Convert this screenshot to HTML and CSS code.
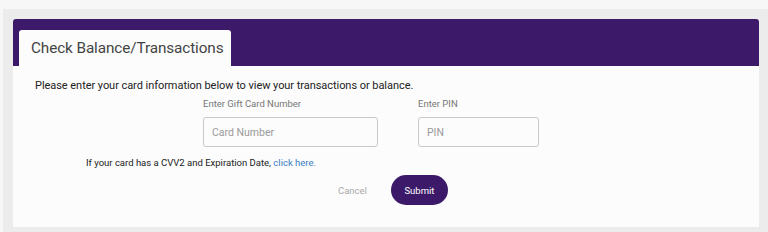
FILE: index.html
```html
<!DOCTYPE html>
<html>
<head>
<meta charset="utf-8">
<link rel="stylesheet" href="styles.css">
</head>
<body>
<div class="page">
  <div class="outer">
    <div class="card">
      <div class="card-head">
        <div class="tab">Check Balance/Transactions</div>
      </div>
      <div class="card-body">
        <p class="intro">Please enter your card information below to view your transactions or balance.</p>
        <div class="fields">
          <div class="field field-card">
            <label class="label">Enter Gift Card Number</label>
            <input class="input" type="text" placeholder="Card Number">
          </div>
          <div class="field field-pin">
            <label class="label">Enter PIN</label>
            <input class="input" type="text" placeholder="PIN">
          </div>
        </div>
        <p class="note">If your card has a CVV2 and Expiration Date, <a class="link" href="#">click here.</a></p>
        <div class="actions">
          <button class="btn-cancel" type="button">Cancel</button>
          <button class="btn-submit" type="button">Submit</button>
        </div>
      </div>
    </div>
  </div>
</div>
</body>
</html>
```
FILE: styles.css
```css
html, body {
  margin: 0;
  padding: 0;
  background: #f7f7f7;
  font-family: Roboto, "Liberation Sans", sans-serif;
  height: 232px;
  overflow: hidden;
}
.page {
  padding: 9px 0 0 3px;
}
.outer {
  background: #ececec;
  padding: 10px 9px 10px 10px;
}
.card {
  display: flex;
  flex-direction: column;
}
.card-head {
  background: #3c1a69;
  height: 47px;
  border-radius: 3px 3px 0 0;
  display: flex;
  align-items: flex-end;
  padding-left: 6px;
}
.tab {
  background: #fcfcfc;
  height: 36px;
  width: 212px;
  box-sizing: border-box;
  border-radius: 3px 3px 0 0;
  padding-left: 12px;
  font-size: 15.3px;
  letter-spacing: -0.1px;
  line-height: 36px;
  white-space: nowrap;
  color: #444;
}
.card-body {
  background: #fcfcfc;
  height: 161px;
  box-sizing: border-box;
  padding: 13px 0 0 0;
}
.intro {
  margin: 0 0 0 22px;
  font-size: 11px;
  letter-spacing: -0.05px;
  line-height: 14px;
  color: #222;
  white-space: nowrap;
}
.fields {
  display: flex;
  gap: 40px;
  margin: 5px 0 0 190px;
}
.field {
  display: flex;
  flex-direction: column;
}
.label {
  font-size: 9.5px;
  line-height: 12px;
  color: #777;
  margin-bottom: 7px;
  white-space: nowrap;
}
.input {
  height: 30px;
  box-sizing: border-box;
  border: 1px solid #c8c8c8;
  border-radius: 3px;
  background: #fcfcfc;
  padding: 0 8px;
  font-family: Roboto, "Liberation Sans", sans-serif;
  font-size: 10.5px;
  color: #333;
  outline: none;
}
.input::placeholder {
  color: #9a9a9a;
}
.field-card .input { width: 175px; }
.field-pin .input { width: 121px; }
.note {
  margin: 10px 0 0 73px;
  font-size: 9.5px;
  line-height: 12px;
  color: #222;
  white-space: nowrap;
}
.link {
  color: #3a7cc4;
  text-decoration: none;
}
.actions {
  display: flex;
  align-items: center;
  margin: 6px 0 0 325px;
  gap: 24px;
}
.btn-cancel {
  background: none;
  border: 0;
  padding: 0;
  font-family: Roboto, "Liberation Sans", sans-serif;
  font-size: 9.5px;
  color: #aaa;
}
.btn-submit {
  background: #3c1a69;
  color: #fff;
  border: 0;
  height: 30px;
  width: 57px;
  border-radius: 15px;
  font-family: Roboto, "Liberation Sans", sans-serif;
  font-size: 9.5px;
}
```
